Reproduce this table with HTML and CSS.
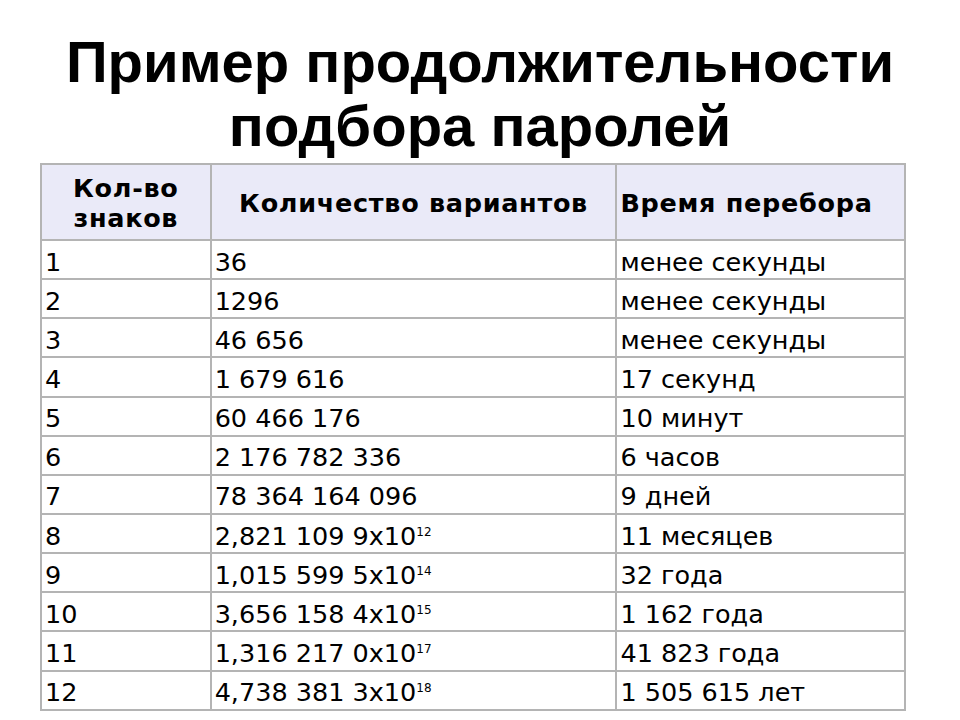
FILE: index.html
```html
<!DOCTYPE html>
<html lang="ru">
<head>
<meta charset="utf-8">
<link rel="stylesheet" href="styles.css">
</head>
<body>
<div class="slide">
  <h1 class="title">Пример продолжительности<br>подбора паролей</h1>
  <table class="grid">
    <colgroup><col class="c1"><col class="c2"><col class="c3"></colgroup>
    <thead>
      <tr><th class="center">Кол-во<br>знаков</th><th class="center">Количество вариантов</th><th class="left">Время перебора</th></tr>
    </thead>
    <tbody>
      <tr><td>1</td><td>36</td><td>менее секунды</td></tr>
      <tr><td>2</td><td>1296</td><td>менее секунды</td></tr>
      <tr><td>3</td><td>46 656</td><td>менее секунды</td></tr>
      <tr><td>4</td><td>1 679 616</td><td>17 секунд</td></tr>
      <tr><td>5</td><td>60 466 176</td><td>10 минут</td></tr>
      <tr><td>6</td><td>2 176 782 336</td><td>6 часов</td></tr>
      <tr><td>7</td><td>78 364 164 096</td><td>9 дней</td></tr>
      <tr><td>8</td><td>2,821 109 9x10<sup>12</sup></td><td>11 месяцев</td></tr>
      <tr><td>9</td><td>1,015 599 5x10<sup>14</sup></td><td>32 года</td></tr>
      <tr><td>10</td><td>3,656 158 4x10<sup>15</sup></td><td>1 162 года</td></tr>
      <tr><td>11</td><td>1,316 217 0x10<sup>17</sup></td><td>41 823 года</td></tr>
      <tr><td>12</td><td>4,738 381 3x10<sup>18</sup></td><td>1 505 615 лет</td></tr>
    </tbody>
  </table>
</div>
</body>
</html>
```
FILE: styles.css
```css
html, body {
  margin: 0;
  padding: 0;
  background: #ffffff;
}
.slide {
  width: 960px;
  height: 720px;
  overflow: hidden;
}
.title {
  margin: 0;
  padding-top: 30px;
  height: 133px;
  font-family: "Liberation Sans", Arial, sans-serif;
  font-weight: bold;
  font-size: 58px;
  line-height: 64px;
  text-align: center;
  color: #000;
}
.grid {
  margin-left: 40px;
  width: 866px;
  border-collapse: collapse;
  font-family: "DejaVu Sans", Verdana, sans-serif;
  font-size: 25.5px;
  color: #000;
}
.c1 { width: 170px; }
.c2 { width: 407px; }
.c3 { width: 289px; }
.grid th, .grid td {
  border: 2px solid #b4b4b4;
  padding: 0 3px;
}
.grid th {
  background: #eaeaf8;
  height: 72px;
  font-weight: bold;
  letter-spacing: 0.7px;
  line-height: 30px;
  padding-top: 2px;
  padding-bottom: 0;
}
.grid th.center { text-align: center; }
.grid th.left { text-align: left; }
.grid td {
  height: 33.15px;
  line-height: 28px;
  padding-top: 4px;
  padding-bottom: 0;
  vertical-align: middle;
  text-align: left;
  white-space: nowrap;
}
.grid sup {
  font-size: 12px;
  line-height: 0;
  vertical-align: 9px;
}
```
